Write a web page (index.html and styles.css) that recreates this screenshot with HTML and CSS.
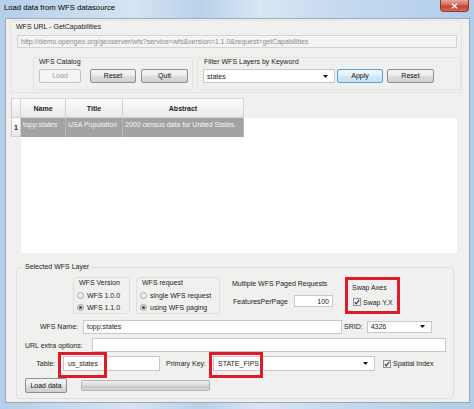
FILE: index.html
```html
<!DOCTYPE html>
<html>
<head>
<meta charset="utf-8">
<link rel="stylesheet" href="styles.css">
</head>
<body>
<div class="window">
  <div class="titlebar">
    <span class="title">Load data from WFS datasource</span>
    <span class="close"><svg width="7" height="6" viewBox="0 0 7 6"><path d="M1 0.8L6 5.2M6 0.8L1 5.2" stroke="#fff" stroke-width="1.5"/></svg></span>
  </div>
  <div class="dialog">
    <div class="topbox">
      <div class="lbl url-lbl">WFS URL - GetCapabilities</div>
      <div class="field disabled url">http://demo.opengeo.org/geoserver/wfs?service=wfs&amp;version=1.1.0&amp;request=getCapabilities</div>
      <div class="toprow">
        <div class="catalog">
          <div class="lbl sub-lbl">WFS Catalog</div>
          <div class="btnrow">
            <div class="btn btn-disabled w-load">Load</div>
            <div class="btn w-reset1">Reset</div>
            <div class="btn w-quit">Quit</div>
          </div>
        </div>
        <div class="filter">
          <div class="lbl sub-lbl">Filter WFS Layers by Keyword</div>
          <div class="btnrow">
            <div class="combo w-filter"><span class="combo-text">states</span><svg class="arrow" width="5" height="3" viewBox="0 0 5 3"><path d="M0 0H5L2.5 3Z" fill="#111"/></svg></div>
            <div class="btn btn-default w-apply">Apply</div>
            <div class="btn w-reset2">Reset</div>
          </div>
        </div>
      </div>
    </div>

    <div class="tbl">
      <div class="thead">
        <div class="corner"></div>
        <div class="th c-name">Name</div>
        <div class="th c-title">Title</div>
        <div class="th c-abs">Abstract</div>
      </div>
      <div class="tbody">
        <div class="vhead"><div class="vh">1</div></div>
        <div class="viewport">
          <div class="tr">
            <div class="td c-name">topp:states</div>
            <div class="td c-title">USA Population</div>
            <div class="td c-abs">2000 census data for United States.</div>
          </div>
        </div>
      </div>
    </div>

    <div class="selgroup">
      <div class="gtitle">Selected WFS Layer</div>
      <div class="grow">
        <div class="ibox vbox">
          <div class="ititle">WFS Version</div>
          <div class="opt first"><svg width="7" height="7" viewBox="0 0 7 7"><circle cx="3.5" cy="3.5" r="3" fill="#eeeeee" stroke="#9c9c9c" stroke-width="0.8"/></svg><span>WFS 1.0.0</span></div>
          <div class="opt"><svg width="7" height="7" viewBox="0 0 7 7"><circle cx="3.5" cy="3.5" r="3" fill="#eeeeee" stroke="#8a8a8a" stroke-width="0.8"/><circle cx="3.5" cy="3.5" r="1.6" fill="#2f4a6e"/></svg><span>WFS 1.1.0</span></div>
        </div>
        <div class="ibox rbox">
          <div class="ititle">WFS request</div>
          <div class="opt first"><svg width="7" height="7" viewBox="0 0 7 7"><circle cx="3.5" cy="3.5" r="3" fill="#eeeeee" stroke="#9c9c9c" stroke-width="0.8"/></svg><span>single WFS request</span></div>
          <div class="opt"><svg width="7" height="7" viewBox="0 0 7 7"><circle cx="3.5" cy="3.5" r="3" fill="#eeeeee" stroke="#8a8a8a" stroke-width="0.8"/><circle cx="3.5" cy="3.5" r="1.6" fill="#2f4a6e"/></svg><span>using WFS paging</span></div>
        </div>
        <div class="mbox">
          <div class="mtitle">Multiple WFS Paged Requests</div>
          <div class="mrow"><span class="fpp">FeaturesPerPage</span><div class="field num">100</div></div>
        </div>
        <div class="swap">
          <div class="stitle">Swap Axes</div>
          <div class="chk"><svg width="8" height="8" viewBox="0 0 8 8"><rect x="0.5" y="0.5" width="7" height="7" fill="#eef2f6" stroke="#8e9196"/><path d="M1.8 4.1L3.3 5.8L6.2 1.9" stroke="#26374f" stroke-width="1.1" fill="none"/></svg><span>Swap Y,X</span></div>
        </div>
      </div>

      <div class="frow row-name">
        <span class="lab lab-name">WFS Name:</span>
        <div class="field f-name">topp:states</div>
        <span class="lab lab-srid">SRID:</span>
        <div class="combo w-srid"><span class="combo-text">4326</span><svg class="arrow" width="5" height="3" viewBox="0 0 5 3"><path d="M0 0H5L2.5 3Z" fill="#111"/></svg></div>
      </div>

      <div class="frow row-url">
        <span class="lab lab-url">URL extra options:</span>
        <div class="field f-url"></div>
      </div>

      <div class="frow row-table">
        <span class="lab lab-table">Table:</span>
        <div class="field f-table">us_states</div>
        <span class="lab lab-pk">Primary Key:</span>
        <div class="combo w-pk"><span class="combo-text">STATE_FIPS</span><svg class="arrow" width="5" height="3" viewBox="0 0 5 3"><path d="M0 0H5L2.5 3Z" fill="#111"/></svg></div>
        <div class="chk chk-si"><svg width="8" height="8" viewBox="0 0 8 8"><rect x="0.5" y="0.5" width="7" height="7" fill="#eef2f6" stroke="#8e9196"/><path d="M1.8 4.1L3.3 5.8L6.2 1.9" stroke="#26374f" stroke-width="1.1" fill="none"/></svg><span>Spatial Index</span></div>
        <div class="mark mark-table"></div>
        <div class="mark mark-pk"></div>
      </div>

      <div class="frow row-load">
        <div class="btn w-loaddata">Load data</div>
        <div class="progress"></div>
      </div>
    </div>
  </div>
</div>
</body>
</html>
```

FILE: styles.css
```css
* { box-sizing: border-box; }
html, body { margin: 0; padding: 0; }
body {
  width: 474px;
  height: 409px;
  overflow: hidden;
  font-family: "Liberation Sans", Arial, sans-serif;
  font-size: 7px;
  color: #1c1c1c;
  background: #a9c9e8;
}
.window {
  width: 474px;
  height: 409px;
  display: flex;
  flex-direction: column;
  background: linear-gradient(to right, #b3cfeb 0%, #c7dbef 15%, #d6e4f2 28%, #b9d1ea 42%, #d9e6f3 55%, #c5d9ee 72%, #b0cdea 100%);
}
.titlebar {
  flex: none;
  height: 18px;
  display: flex;
  align-items: flex-start;
}
.title {
  margin: 3px 0 0 4px;
  font-size: 7.7px;
  line-height: 10px;
  color: #000;
}
.close {
  margin-left: auto;
  margin-right: 5px;
  width: 29px;
  height: 12px;
  border: 1px solid #8b3a34;
  border-top: none;
  border-radius: 0 0 4px 4px;
  background: linear-gradient(#e9a899, #d66a5a 45%, #c5402f 55%, #d46a55);
  display: flex;
  align-items: center;
  justify-content: center;
}
.dialog {
  flex: none;
  margin-left: 5px;
  width: 465px;
  height: 385px;
  border: 1px solid #9aa8b6;
  background: #f0f0ee;
}

/* generic */
.lbl { line-height: 9px; height: 9px; white-space: nowrap; }
.field {
  background: #fff;
  border: 1px solid #c6cacf;
  white-space: nowrap;
  overflow: hidden;
  padding-left: 3px;
  display: flex;
  align-items: center;
}
.field.disabled { background: #f3f3f2; color: #8c8c8c; border-color: #d2d5d8; }
.btn {
  height: 14px;
  border: 1px solid #8e8f8f;
  border-radius: 2px;
  background: linear-gradient(#f5f5f5, #ececec 45%, #dedede 50%, #d0d0d0);
  text-align: center;
  line-height: 12px;
  color: #111;
  flex: none;
}
.btn-disabled { border-color: #c0c2c4; background: #f4f4f4; color: #9b9b9b; }
.btn-default { border-color: #5a9dd3; background: linear-gradient(#f1f8fd, #e2f0fb 45%, #d4e8f8 50%, #c6e0f5); }
.combo {
  background: #fff;
  border: 1px solid #c6cacf;
  display: flex;
  align-items: center;
  padding: 0 3px 0 3px;
  flex: none;
}
.combo-text { flex: 1; white-space: nowrap; }
.arrow { flex: none; }

/* top area */
.topbox {
  margin: 1px 0 0 4px;
  width: 452px;
  height: 73px;
  border: 1px solid #e1e3e4;
  border-radius: 2px;
}
.url-lbl { margin: 1px 0 0 5px; }
.url { margin: 4px 0 0 6px; width: 440px; height: 13px; }
.toprow { display: flex; margin-top: 9px; height: 33px; }
.catalog {
  margin-left: 22px;
  width: 160px;
  height: 33px;
  border: 1px solid #e1e3e4;
  border-radius: 2px;
  padding-left: 5px;
}
.filter {
  margin-left: 4px;
  width: 264px;
  height: 33px;
  border: 1px solid #e1e3e4;
  border-radius: 2px;
  padding-left: 5px;
}
.sub-lbl { margin-top: -1px; }
.filter .sub-lbl { padding-left: 1px; }
.btnrow { display: flex; margin-top: 3px; height: 14px; }
.w-load { width: 42px; }
.w-reset1 { width: 46px; margin-left: 9px; }
.w-quit { width: 47px; margin-left: 5px; }
.w-filter { width: 132px; height: 14px; }
.w-filter .arrow { margin-right: 3px; }
.w-apply { width: 46px; margin-left: 2px; }
.w-reset2 { width: 47px; margin-left: 4px; }

/* table */
.tbl {
  margin: 5px 0 0 5px;
  width: 446px;
  height: 155px;
  display: flex;
  flex-direction: column;
}
.thead { display: flex; height: 20px; flex: none; }
.corner, .th, .vh {
  background: linear-gradient(#fcfcfc, #f3f3f3 50%, #e9e9e9);
  border-right: 1px solid #d2d2d2;
  border-bottom: 1px solid #d2d2d2;
}
.corner { width: 10px; border-left: 1px solid #c9c9c9; border-top: 1px solid #d8d8d8; }
.th { font-weight: bold; text-align: center; line-height: 19px; border-top: 1px solid #d8d8d8; }
.c-name { width: 45px; }
.c-title { width: 57px; }
.c-abs { width: 121px; }
.tbody { display: flex; flex: 1; }
.vhead { width: 10px; flex: none; }
.vh {
  height: 19px;
  font-weight: bold;
  text-align: center;
  line-height: 19px;
  border-left: 1px solid #c9c9c9;
}
.viewport { flex: 1; background: #fff; }
.tr { display: flex; height: 19px; }
.td {
  background: #a3a3a3;
  color: #f6f6f6;
  padding: 2px 0 0 2px;
  line-height: 9px;
  border-right: 1px solid #b9b9b9;
  white-space: nowrap;
  overflow: hidden;
}

/* selected layer group */
.selgroup {
  margin: 14px 0 0 10px;
  width: 438px;
  height: 132px;
  border: 1px solid #dcdfe2;
  border-radius: 3px;
}
.gtitle {
  margin: -6px 0 0 6px;
  padding: 0 2px;
  width: fit-content;
  height: 9px;
  line-height: 9px;
  background: #f0f0ee;
}
.grow { display: flex; margin-top: 6px; height: 37px; }
.ibox {
  height: 37px;
  border: 1px solid #dcdfe2;
  border-radius: 3px;
  padding-left: 3px;
}
.vbox { margin-left: 56px; width: 57px; }
.rbox { margin-left: 6px; width: 84px; }
.ititle { padding-left: 2px; line-height: 9px; height: 9px; white-space: nowrap; }
.opt { display: flex; align-items: center; height: 12px; white-space: nowrap; }
.opt.first { margin-top: 2px; }
.opt svg { flex: none; margin-right: 3px; }
.mbox { margin-left: 6px; width: 114px; height: 37px; padding-left: 6px; }
.mtitle { margin-top: 2px; line-height: 9px; height: 9px; white-space: nowrap; padding-left: 0; }
.mrow { display: flex; align-items: center; margin-top: 7px; height: 12px; padding-left: 1px; }
.fpp { width: 54px; flex: none; }
.num { margin-left: 7px; width: 39px; height: 12px; justify-content: flex-end; padding-right: 3px; }
.swap {
  margin-left: 5px;
  width: 55px;
  height: 37px;
  border: 3px solid #dc1c2a;
  padding-left: 4px;
}
.stitle { margin-top: 3px; line-height: 9px; height: 9px; white-space: nowrap; }
.chk { display: flex; align-items: center; height: 12px; white-space: nowrap; }
.swap .chk { margin-top: 4px; padding-left: 1px; }
.chk svg { flex: none; margin-right: 2px; }

.frow { display: flex; align-items: center; }
.lab { white-space: nowrap; flex: none; }
.row-name { margin-top: 5px; height: 15px; }
.lab-name { width: 61px; text-align: right; }
.f-name { margin-left: 5px; width: 259px; height: 14px; }
.lab-srid { margin-left: 2px; }
.w-srid { margin-left: 4px; width: 65px; height: 12px; }
.w-srid .arrow { margin-right: 3px; }
.row-url { margin-top: 4px; height: 14px; }
.lab-url { margin-left: 8px; width: 67px; }
.f-url { width: 354px; height: 14px; }
.row-table { margin-top: 4px; height: 15px; position: relative; }
.lab-table { width: 38px; text-align: right; }
.f-table { margin-left: 8px; width: 97px; height: 15px; padding-left: 4px; }
.lab-pk { margin-left: 6px; width: 40px; }
.w-pk { margin-left: 7px; width: 162px; height: 15px; padding-left: 4px; }
.w-pk .arrow { margin-right: 3px; }
.chk-si { margin-left: 8px; }
.mark {
  position: absolute;
  top: -4px;
  height: 26px;
  border: 3px solid #dc1c2a;
}
.mark-table { left: 41px; width: 49px; }
.mark-pk { left: 192px; width: 54px; }
.row-load { margin-top: 7px; height: 15px; }
.w-loaddata { margin-left: 8px; width: 42px; height: 15px; line-height: 13px; }
.progress {
  margin-left: 14px;
  width: 129px;
  height: 11px;
  border: 1px solid #b4b4b4;
  border-radius: 2px;
  background: linear-gradient(#eeeeee, #d9d9d9 50%, #c8c8c8 51%, #d4d4d4);
}
```
